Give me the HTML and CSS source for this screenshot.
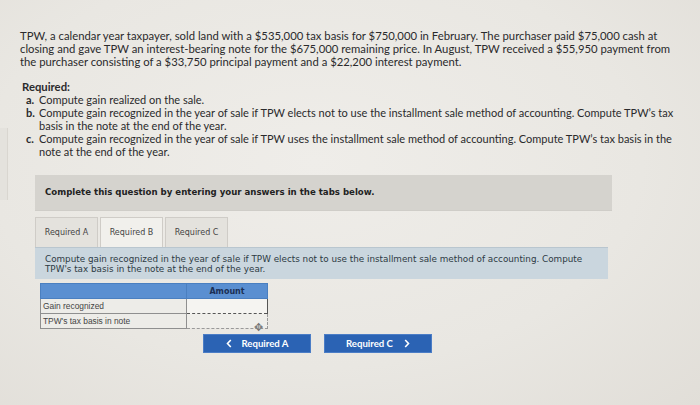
FILE: index.html
```html
<!DOCTYPE html>
<html>
<head>
<meta charset="utf-8">
<link rel="stylesheet" href="styles.css">
</head>
<body>
<div class="edge"></div>
<div class="page">
  <p class="intro">TPW, a calendar year taxpayer, sold land with a $535,000 tax basis for $750,000 in February. The purchaser paid $75,000 cash at closing and gave TPW an interest-bearing note for the $675,000 remaining price. In August, TPW received a $55,950 payment from the purchaser consisting of a $33,750 principal payment and a $22,200 interest payment.</p>
  <div class="required">
    <div class="req-title">Required:</div>
    <div class="item"><span class="lbl">a.</span>Compute gain realized on the sale.</div>
    <div class="item"><span class="lbl">b.</span>Compute gain recognized in the year of sale if TPW elects not to use the installment sale method of accounting. Compute TPW’s tax basis in the note at the end of the year.</div>
    <div class="item"><span class="lbl">c.</span>Compute gain recognized in the year of sale if TPW uses the installment sale method of accounting. Compute TPW’s tax basis in the note at the end of the year.</div>
  </div>
</div>
<div class="work">
  <div class="banner">Complete this question by entering your answers in the tabs below.</div>
  <div class="tabs">
    <div class="tab">Required A</div>
    <div class="tab active">Required B</div>
    <div class="tab">Required C</div>
  </div>
  <div class="instr">Compute gain recognized in the year of sale if TPW elects not to use the installment sale method of accounting. Compute TPW's tax basis in the note at the end of the year.</div>
  <table class="grid">
    <tr class="head"><th class="c1"></th><th class="c2">Amount</th></tr>
    <tr><td class="c1">Gain recognized</td><td class="c2 in first"></td></tr>
    <tr><td class="c1">TPW's tax basis in note</td><td class="c2 in dotted"><span class="cursor">✥</span></td></tr>
  </table>
  <div class="nav">
    <div class="btn"><svg class="chev" width="6" height="9" viewBox="0 0 6 9"><path d="M4.8 1 L1.5 4.5 L4.8 8" fill="none" stroke="#fff" stroke-width="1.6"/></svg>Required A</div>
    <div class="btn">Required C<svg class="chev r" width="6" height="9" viewBox="0 0 6 9"><path d="M1.2 1 L4.5 4.5 L1.2 8" fill="none" stroke="#fff" stroke-width="1.6"/></svg></div>
  </div>
</div>
</body>
</html>
```
FILE: styles.css
```css
html, body {
  margin: 0;
  padding: 0;
}
body {
  width: 700px;
  height: 405px;
  overflow: hidden;
  background: radial-gradient(ellipse at 45% 40%, #efede9 0%, #e9e7e2 60%, #e1ded8 100%);
  font-family: Lato, "Open Sans", sans-serif;
  color: #2a2a2c;
  position: relative;
}
.edge {
  position: absolute;
  left: 0;
  top: 128px;
  width: 7px;
  height: 72px;
  border-right: 1px solid #d9d6d0;
  background: #e4e2dd;
}
.page {
  padding: 29px 0 0 20px;
}
.intro {
  margin: 0;
  width: 660px;
  font-size: 11.3px;
  line-height: 13px;
}
.required {
  margin-top: 12px;
  padding-left: 2px;
  font-size: 11.3px;
  line-height: 13px;
}
.req-title {
  font-weight: bold;
}
.item {
  padding-left: 17px;
  text-indent: -13px;
  width: 642px;
  font-size: 11px;
}
.lbl {
  display: inline-block;
  width: 13px;
  text-indent: 0;
  font-weight: bold;
}
.work {
  margin: 17px 0 0 35px;
  font-family: "DejaVu Sans", Verdana, sans-serif;
}
.banner {
  width: 567px;
  height: 35px;
  padding-left: 10px;
  background: #d5d3ce;
  font-size: 8.6px;
  font-weight: bold;
  line-height: 35px;
  color: #222;
  border-bottom: 1px solid #cfcdc8;
}
.tabs {
  display: flex;
  gap: 2px;
  margin-top: 6px;
}
.tab {
  width: 63px;
  height: 30px;
  box-sizing: border-box;
  border: 1px solid #cfccc7;
  border-bottom: none;
  background: #e4e2dd;
  font-size: 8px;
  line-height: 29px;
  text-align: center;
  color: #444;
}
.tab.active {
  background: #f1f0ec;
}
.instr {
  width: 553px;
  padding: 6px 10px 5px 10px;
  background: #cad6de;
  border-top: 1px solid #b9c6cf;
  font-size: 8.8px;
  line-height: 10px;
  color: #2d3a44;
}
.grid {
  margin: 4px 0 0 5px;
  border-collapse: collapse;
  font-family: "Liberation Sans", Arial, sans-serif;
  font-size: 8.4px;
  color: #444;
}
.grid th {
  background: #5a8fd1;
  height: 14px;
  padding: 0;
  border: 1px solid #4a7fc0;
  font-family: "DejaVu Sans", Verdana, sans-serif;
  font-size: 8px;
  color: #1c2f55;
  font-weight: bold;
}
.grid td {
  height: 14px;
  padding: 0 2px;
  border: 1px solid #8f8f8f;
  background: #edece8;
}
.grid .c1 {
  width: 141px;
}
.grid .c2 {
  width: 76px;
}
.grid td.in {
  background: #efeeea;
}
.grid td.first {
  background: #f5f4f1;
  border: 1px solid #555;
  border-bottom: 1px dashed #555;
}
.grid td.dotted {
  border: 1px dashed #999;
  position: relative;
}
.cursor {
  position: absolute;
  right: 4px;
  bottom: -6px;
  font-size: 11px;
  color: #777;
}
.nav {
  display: flex;
  gap: 13px;
  margin: 5px 0 0 168px;
}
.btn {
  width: 108px;
  height: 19px;
  background: #2b63b4;
  border: 1px solid #4b7dc6;
  box-sizing: border-box;
  color: #fff;
  font-family: Lato, "Open Sans", sans-serif;
  font-size: 9.6px;
  font-weight: bold;
  display: flex;
  align-items: center;
  justify-content: center;
}
.chev {
  margin-right: 10px;
}
.chev.r {
  margin: 0 0 0 11px;
}
```
